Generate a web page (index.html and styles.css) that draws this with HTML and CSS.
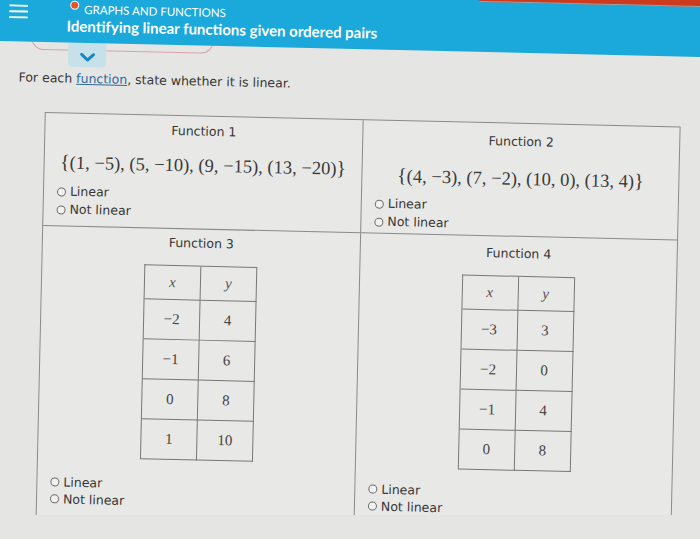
FILE: index.html
```html
<!DOCTYPE html>
<html lang="en">
<head>
<meta charset="utf-8">
<title>Identifying linear functions given ordered pairs</title>
<link rel="stylesheet" href="styles.css">
</head>
<body>
<div class="page">
  <header class="topbar">
    <svg class="menu" width="19" height="14" viewBox="0 0 19 14" aria-hidden="true">
      <line x1="1" y1="1" x2="18" y2="1"/>
      <line x1="1" y1="7" x2="18" y2="7"/>
      <line x1="1" y1="13" x2="18" y2="13"/>
    </svg>
    <div class="titles">
      <div class="crumb"><span class="dot"></span><span class="crumb-text">GRAPHS AND FUNCTIONS</span></div>
      <h1 class="title">Identifying linear functions given ordered pairs</h1>
    </div>
  </header>
  <div class="subbar">
    <div class="outline"></div>
    <div class="tab">
      <svg class="chev" width="15" height="9" viewBox="0 0 15 9" aria-hidden="true">
        <polyline points="1.5,1.5 7.5,7 13.5,1.5"/>
      </svg>
    </div>
  </div>
  <p class="prompt">For each <a class="term">function</a>, state whether it is linear.</p>

  <div class="grid">
    <div class="cell top c-left c1">
      <div class="fname">Function 1</div>
      <div class="set"><span class="br">{</span>(1, −5), (5, −10), (9, −15), (13, −20)<span class="br">}</span></div>
      <div class="choices">
        <div class="choice"><span class="radio"></span>Linear</div>
        <div class="choice"><span class="radio"></span>Not linear</div>
      </div>
    </div>
    <div class="cell top">
      <div class="fname">Function 2</div>
      <div class="set"><span class="br">{</span>(4, −3), (7, −2), (10, 0), (13, 4)<span class="br">}</span></div>
      <div class="choices">
        <div class="choice"><span class="radio"></span>Linear</div>
        <div class="choice"><span class="radio"></span>Not linear</div>
      </div>
    </div>
    <div class="cell bottom c-left c3">
      <div class="fname">Function 3</div>
      <div class="xy">
        <div class="h"><i>x</i></div><div class="h"><i>y</i></div>
        <div>−2</div><div>4</div>
        <div>−1</div><div>6</div>
        <div>0</div><div>8</div>
        <div>1</div><div>10</div>
      </div>
      <div class="choices low">
        <div class="choice"><span class="radio"></span>Linear</div>
        <div class="choice"><span class="radio"></span>Not linear</div>
      </div>
    </div>
    <div class="cell bottom c4">
      <div class="fname">Function 4</div>
      <div class="xy">
        <div class="h"><i>x</i></div><div class="h"><i>y</i></div>
        <div>−3</div><div>3</div>
        <div>−2</div><div>0</div>
        <div>−1</div><div>4</div>
        <div>0</div><div>8</div>
      </div>
      <div class="choices low">
        <div class="choice"><span class="radio"></span>Linear</div>
        <div class="choice"><span class="radio"></span>Not linear</div>
      </div>
    </div>
  </div>
</div>
</body>
</html>
```

FILE: styles.css
```css
html, body {
  margin: 0;
  padding: 0;
  overflow: hidden;
  background: #e5e5e3;
}

.page {
  width: 720px;
  transform: rotate(1.3deg);
  transform-origin: 0 0;
  font-family: "DejaVu Sans", Verdana, sans-serif;
  color: #363636;
}

/* header */
.topbar {
  position: relative;
  z-index: 3;
  display: flex;
  align-items: flex-start;
  margin-top: -30px;
  padding-top: 30px;
  height: 41px;
  background: #1ba8da;
  color: #fff;
}
.topbar::before {
  content: "";
  position: absolute;
  left: 480px;
  right: 0;
  top: 0;
  height: 20px;
  background: #cc3b1e;
  border-bottom: 1px solid #8fa7b0;
}
.menu {
  margin: 4px 0 0 10px;
  flex: none;
}
.menu line {
  stroke: #fff;
  stroke-width: 2;
  stroke-linecap: round;
}
.titles {
  margin-left: 39px;
  font-family: Lato, "Open Sans", sans-serif;
}
.crumb {
  display: flex;
  align-items: flex-start;
  padding-top: 1px;
  height: 14px;
}
.dot {
  width: 7px;
  height: 7px;
  margin: -2px 0 0 3px;
  border: 1.5px solid #fff;
  border-radius: 50%;
  background: #e4532a;
  flex: none;
}
.crumb-text {
  margin-left: 5px;
  font-size: 11.5px;
  line-height: 14px;
}
.title {
  margin: 0;
  font-size: 15px;
  line-height: 18px;
  font-weight: 700;
}

/* sub bar */
.subbar {
  position: relative;
  height: 24px;
}
.outline {
  position: absolute;
  z-index: 1;
  left: 33px;
  top: -20px;
  width: 180px;
  height: 26px;
  border: 1px solid #d6a4aa;
  border-radius: 12px;
}
.tab {
  position: relative;
  z-index: 2;
  margin-left: 70px;
  width: 38px;
  height: 24px;
  background: #c6e1ea;
  border-radius: 0 0 4px 4px;
  display: flex;
  justify-content: center;
  padding-top: 10px;
  box-sizing: border-box;
}
.chev polyline {
  fill: none;
  stroke: #1689bf;
  stroke-width: 3;
  stroke-linecap: round;
  stroke-linejoin: round;
}

/* prompt */
.prompt {
  margin: 4px 0 0 21px;
  font-size: 12.5px;
  line-height: 16px;
}
.term {
  color: #2f6a9c;
  text-decoration: underline;
}

/* table of functions */
.grid {
  margin: 26px 0 0 48px;
  width: 636px;
  box-sizing: border-box;
  border: 1px solid #8a8a8a;
  display: grid;
  grid-template-columns: 318px 1fr;
  grid-template-rows: 113px 289px;
  background: #e8e8e6;
}
.cell {
  box-sizing: border-box;
  display: flex;
  flex-direction: column;
  align-items: center;
  padding: 10px 13px 0;
}
.c-left {
  border-right: 1px solid #8a8a8a;
}
.cell.top {
  border-bottom: 1px solid #8a8a8a;
}
.cell.c1 {
  padding-top: 7px;
}
.cell.bottom {
  padding: 9px 13px 8px;
}
.cell.c3 {
  padding-top: 6px;
}
.fname {
  font-size: 12.5px;
  line-height: 16px;
}
.set {
  margin-top: 17px;
  font-family: "Liberation Serif", "Times New Roman", serif;
  font-size: 18.5px;
  line-height: 22px;
  color: #3a3a3a;
  white-space: nowrap;
}
.c1 .set {
  margin-top: 14px;
}
.br {
  font-size: 20px;
}
.choices {
  align-self: stretch;
  margin-top: 8px;
  font-size: 12.5px;
  line-height: 18px;
}
.c1 .choices {
  margin-top: 9px;
}
.choices.low {
  margin-top: auto;
  line-height: 17px;
}
.choice {
  display: flex;
  align-items: center;
}
.radio {
  width: 9px;
  height: 9px;
  margin-right: 4px;
  border: 1px solid #6b6b6b;
  border-radius: 50%;
  background: #f2f2f2;
  box-sizing: border-box;
  flex: none;
}

/* x / y tables */
.xy {
  margin-top: 11px;
  display: grid;
  grid-template-columns: 56px 56px;
  grid-template-rows: 34px;
  grid-auto-rows: 40px;
  border-top: 1px solid #777;
  border-left: 1px solid #777;
  font-family: "Liberation Serif", "Times New Roman", serif;
  font-size: 15px;
  color: #444;
}
.c3 .xy,
.c4 .xy {
  margin-top: 14px;
}
.xy > div {
  box-sizing: border-box;
  border-right: 1px solid #777;
  border-bottom: 1px solid #777;
  display: flex;
  align-items: center;
  justify-content: center;
}
.xy > .h {
  color: #555;
}
```
